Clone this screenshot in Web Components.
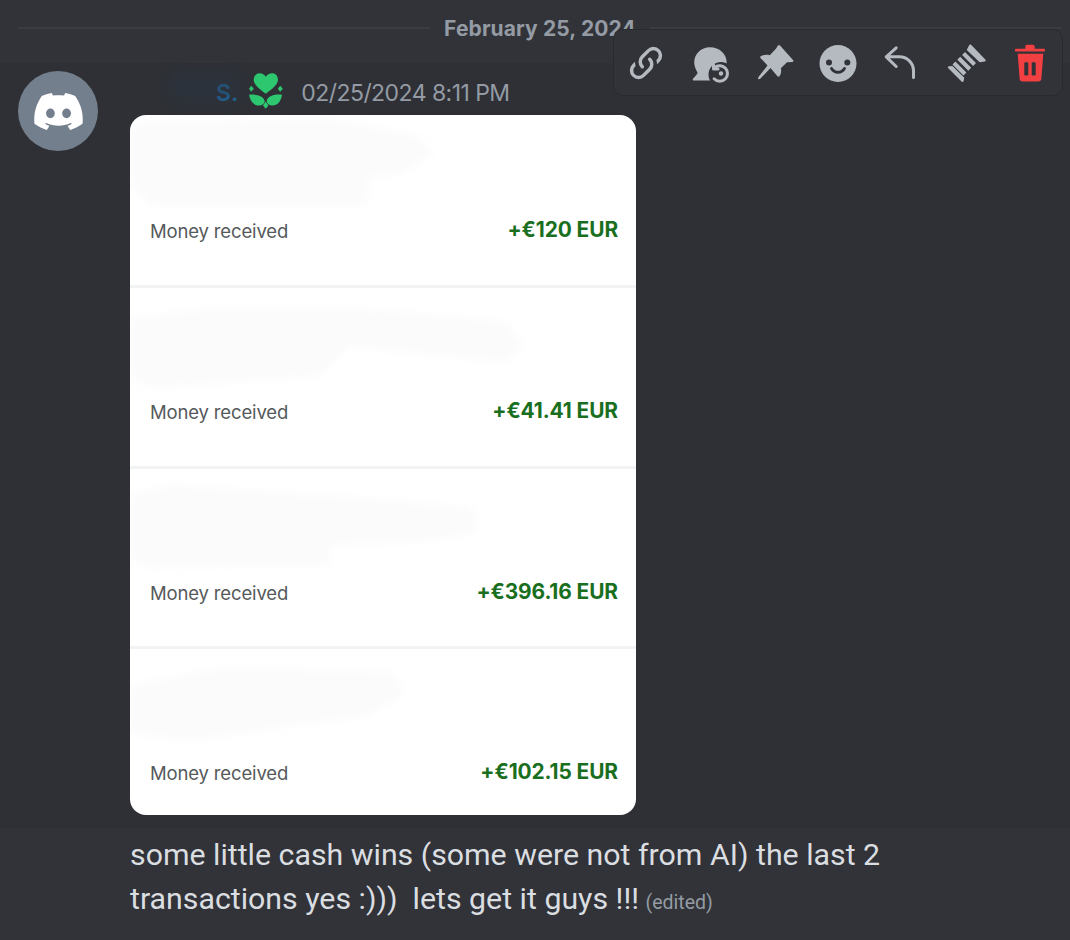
<!DOCTYPE html>
<html lang="en">
<head>
<meta charset="utf-8">
<title>Money received</title>
<style>
  html, body { margin: 0; background: #313338; }
  body { width: 1070px; height: 940px; overflow: hidden; font-family: "Noto Sans", "Liberation Sans", sans-serif; }
</style>
</head>
<body>
<chat-page>
  <date-divider slot="divider">February 25, 2024</date-divider>
  <message-toolbar slot="toolbar"></message-toolbar>
  <chat-message slot="message" stamp="02/25/2024 8:11 PM" author="S.">
    <tx-card>
      <tx-row amount="+€120 EUR" smudge="0"></tx-row>
      <tx-row amount="+€41.41 EUR" smudge="1"></tx-row>
      <tx-row amount="+€396.16 EUR" smudge="2"></tx-row>
      <tx-row amount="+€102.15 EUR" smudge="3"></tx-row>
    </tx-card>
    <span slot="text">some little cash wins (some were not from AI) the last 2<br>transactions yes :)))&nbsp; lets get it guys !!!</span>
  </chat-message>
</chat-page>

<script>
// 页面外壳
class ChatPage extends HTMLElement {
  constructor() {
    super();
    this.attachShadow({mode: 'open'});
    this.shadowRoot.innerHTML = `
      <style>
        :host { display: block; position: relative; height: 940px; background: #313338; }
        .bar { position: absolute; top: 29px; left: 613px; z-index: 2; }
      </style>
      <slot name="divider"></slot>
      <div class="bar"><slot name="toolbar"></slot></div>
      <slot name="message"></slot>
    `;
  }
}

class DateDivider extends HTMLElement {
  constructor() {
    super();
    this.attachShadow({mode: 'open'});
    this.shadowRoot.innerHTML = `
      <style>
        :host { display: flex; align-items: center; box-sizing: border-box; height: 63px; padding: 0 8px 7px 18px; gap: 14px; }
        i { flex: 1; height: 2px; background: #3a3c42; }
        span { font: 700 21px "Inter", "Liberation Sans", sans-serif; letter-spacing: 0.12px; color: #949ba4; white-space: nowrap; }
      </style>
      <i></i><span><slot></slot></span><i></i>
    `;
  }
}

// 工具栏图标
const ICONS = {
  link: `<svg width="42" height="42" viewBox="0 0 24 24" fill="#b5bac1"><path d="M10.59 13.41c.41.39.41 1.03 0 1.42-.39.39-1.03.39-1.42 0a5.003 5.003 0 0 1 0-7.07l3.54-3.54a5.003 5.003 0 0 1 7.07 0 5.003 5.003 0 0 1 0 7.07l-1.49 1.49c.01-.82-.12-1.64-.4-2.42l.47-.48a2.982 2.982 0 0 0 0-4.24 2.982 2.982 0 0 0-4.24 0l-3.53 3.53a2.982 2.982 0 0 0 0 4.24zm2.82-4.24c.39-.39 1.03-.39 1.42 0a5.003 5.003 0 0 1 0 7.07l-3.54 3.54a5.003 5.003 0 0 1-7.07 0 5.003 5.003 0 0 1 0-7.07l1.49-1.49c-.01.82.12 1.64.4 2.43l-.47.47a2.982 2.982 0 0 0 0 4.24 2.982 2.982 0 0 0 4.24 0l3.53-3.53a2.982 2.982 0 0 0 0-4.24.973.973 0 0 1 0-1.42z"/></svg>`,
  unread: `<svg width="42" height="42" viewBox="0 0 42 42"><path fill="#b5bac1" d="M21 5.200c9.500 0 16.700 6.800 16.700 15.300 0 3-1 6-2.500 8.500L25 38.500H5c-1.200 0-1.600-.9-1-1.800 1.600-2 4-3.800 4.600-6C6.800 27.500 5.200 24 5.200 20.500 5.200 12 12 5.200 21 5.200z"/><circle cx="32" cy="32.500" r="12.500" fill="#313338"/><path fill="none" stroke="#b5bac1" stroke-width="3" stroke-linecap="round" stroke-linejoin="round" d="M29 27h-4.500v-4.500M25 26.500c1.500-2 4-3 6.500-2.800 4 .4 7 3.800 7 7.800 0 4.400-3.500 7.800-7.700 7.800-2.300 0-4.300-1-5.700-2.500"/><circle cx="32" cy="31.500" r="2.200" fill="#b5bac1"/></svg>`,
  pin: `<svg width="42" height="42" viewBox="0 0 42 42" fill="#b5bac1"><path d="M25 3.500c.6-.8 1.400-.8 2 0L40 18c.7.8.4 1.800-.6 2l-5.400.3-6.200 6c.8 2.800.3 5.700-1.400 8-.5.6-1.200.6-1.700.1L17.500 26l-10 10.500c-1 1-2.500 1-2.500 0 0-.8.5-1.500 1-2.300l8.500-10.700-7-7.500c-.6-.6-.5-1.400.2-1.800 2.800-1.500 6-1.900 9-1l6-6.200z"/></svg>`,
  smile: `<svg width="40" height="40" viewBox="0 0 40 40"><circle cx="20" cy="20.500" r="18.500" fill="#b5bac1"/><circle cx="11" cy="19.500" r="3" fill="#313338"/><circle cx="29.300" cy="19.500" r="3" fill="#313338"/><path d="M13.500 25.500c3 5 10 5 13 0" fill="none" stroke="#313338" stroke-width="2.800" stroke-linecap="round"/></svg>`,
  reply: `<svg width="42" height="42" viewBox="0 0 42 42" fill="none" stroke="#b5bac1" stroke-width="3" stroke-linecap="round" stroke-linejoin="round"><g transform="translate(-.5 0)"><path d="M15.700 5.800L5.700 14.800l10 9.700M5.700 14.800h13c8 0 14.300 6 14.300 14v6.800"/></g></svg>`,
  thread: `<svg width="42" height="42" viewBox="0 0 42 42" fill="#b5bac1"><path d="M24 3.500c.5-1 1.500-1.200 2.300-.5l14 14.500c.8.800.4 1.800-.6 2l-5 .7L21.700 8z"/><path d="M20 10l11 11-2.900 2.900-11-11zM15.200 14.800l11 11-2.900 2.900-11-11zM10.400 19.600l11 11-2.900 2.900-11-11z"/><path d="M7.500 24l11.800 11.800-.7 3.200c-.2 1-1.300 1.400-2.100.6L3.300 26.300c-.8-.8-.4-1.900.6-2z"/></svg>`,
  trash: `<svg width="42" height="42" viewBox="0 0 42 42"><path fill="#f23f42" d="M18 2.800h6c1 0 1.700.8 1.700 1.700v2.300H35c.7 0 1 .5 1 1v1.200c0 .3-.3.500-.6.500H6.600c-.3 0-.6-.2-.6-.5V7.800c0-.5.300-1 1-1h9.300V4.500c0-.9.700-1.700 1.700-1.700z"/><path fill="#f23f42" d="M8.700 11.800h25.600l-1.900 25c-.1 1.500-1.300 2.700-2.900 2.700H13.500c-1.600 0-2.800-1.200-2.900-2.700z"/><rect x="15.300" y="20.200" width="4" height="13.300" rx="1.200" fill="#313338"/><rect x="22.700" y="20.200" width="4" height="13.300" rx="1.200" fill="#313338"/></svg>`
};

class MessageToolbar extends HTMLElement {
  constructor() {
    super();
    this.attachShadow({mode: 'open'});
    const names = ['link', 'unread', 'pin', 'smile', 'reply', 'thread', 'trash'];
    this.shadowRoot.innerHTML = `
      <style>
        :host { display: flex; box-sizing: border-box; width: 450px; height: 67px; align-items: center;
                background: #313338; border: 1px solid #292a2f; border-radius: 10px; }
        .ic { flex: 0 0 64px; height: 100%; display: flex; align-items: center; justify-content: center; }
        svg { display: block; }
      </style>
      ${names.map(n => `<div class="ic">${ICONS[n]}</div>`).join('')}
    `;
  }
}

class ChatMessage extends HTMLElement {
  constructor() {
    super();
    this.attachShadow({mode: 'open'});
    this.shadowRoot.innerHTML = `
      <style>
        :host { display: block; }
        .band { display: flex; box-sizing: border-box; height: 765px; padding: 8px 0 0 18px; background: #2e3035; }
        .avatar { flex: 0 0 80px; height: 80px; border-radius: 50%; background: #747f8d; display: flex; align-items: center; justify-content: center; }
        .main { margin-left: 32px; width: 506px; }
        .head { display: flex; align-items: center; height: 44px; position: relative; }
        .name { margin-left: 86px; font: 600 23px "Inter", "Liberation Sans", sans-serif; color: #1e6ba5; }
        .smudge { position: absolute; left: 40px; top: 3px; width: 70px; height: 26px; background: #2b3644; filter: blur(8px); opacity: .55; }
        .badge { margin: -4px 0 0 11px; display: block; }
        .stamp { margin-left: 18px; font: 400 23px "Inter", "Liberation Sans", sans-serif; letter-spacing: -0.55px; color: #949ba4; white-space: nowrap; }
        .text { padding: 5px 0 0 130px; font: 400 30.300px/44px "Roboto", "Liberation Sans", sans-serif; color: #dbdee1; white-space: nowrap; }
        .edited { font-size: 19.500px; color: #949ba4; margin-left: -1px; }
      </style>
      <div class="band">
        <div class="avatar">
          <svg width="49" height="37" viewBox="0 0 24 18.300" fill="#fff"><path transform="translate(0 -2.850)" d="M20.317 4.3698a19.7913 19.7913 0 00-4.8851-1.5152.0741.0741 0 00-.0785.0371c-.211.3753-.4447.8648-.6083 1.2495-1.8447-.2762-3.68-.2762-5.4868 0-.1636-.3933-.4058-.8742-.6177-1.2495a.077.077 0 00-.0785-.037 19.7363 19.7363 0 00-4.8852 1.515.0699.0699 0 00-.0321.0277C.5334 9.0458-.319 13.5799.0992 18.0578a.0824.0824 0 00.0312.0561c2.0528 1.5076 4.0413 2.4228 5.9929 3.0294a.0777.0777 0 00.0842-.0276c.4616-.6304.8731-1.2952 1.226-1.9942a.076.076 0 00-.0416-.1057c-.6528-.2476-1.2743-.5495-1.8722-.8923a.077.077 0 01-.0076-.1277c.1258-.0943.2517-.1923.3718-.2914a.0743.0743 0 01.0776-.0105c3.9278 1.7933 8.18 1.7933 12.0614 0a.0739.0739 0 01.0785.0095c.1202.099.246.1981.3728.2924a.077.077 0 01-.0066.1276 12.2986 12.2986 0 01-1.873.8914.0766.0766 0 00-.0407.1067c.3604.698.7719 1.3628 1.225 1.9932a.076.076 0 00.0842.0286c1.961-.6067 3.9495-1.5219 6.0023-3.0294a.077.077 0 00.0313-.0552c.5004-5.177-.8382-9.6739-3.5485-13.6604a.061.061 0 00-.0312-.0286zM8.02 15.3312c-1.1825 0-2.1569-1.0857-2.1569-2.419 0-1.3332.9555-2.4189 2.157-2.4189 1.2108 0 2.1757 1.0952 2.1568 2.419 0 1.3332-.9555 2.4189-2.1569 2.4189zm7.9748 0c-1.1825 0-2.1569-1.0857-2.1569-2.419 0-1.3332.9554-2.4189 2.1569-2.4189 1.2108 0 2.1757 1.0952 2.1568 2.419 0 1.3332-.946 2.4189-2.1568 2.4189Z"/></svg>
        </div>
        <div class="main">
          <div class="head">
            <div class="smudge"></div>
            <span class="name"></span>
            <svg class="badge" width="34" height="36" viewBox="0 0 34 36" fill="#2dc770">
              <path d="M16.800 20.800C13 17.500 4.700 12.500 4.700 6.800 4.700 3 7.300.3 10.500.3c2.800 0 4.800 1.300 6.300 3.400C18.300 1.600 20.300.3 23.200.3 26.400.3 29 3 29 6.800c0 5.700-8.400 10.700-12.200 14z"/>
              <path d="M15.700 28c-.2 2.300-1.800 4.200-5 4.500C5.500 33 1.500 29 0 21.800c5.500-.8 14.800.5 15.700 6.200zM17.700 28c.2 2.300 1.800 4.200 5 4.500 5.200.5 9.200-3.500 10.300-10.700-5.500-.8-14.400.5-15.300 6.200z"/>
              <path d="M16.700 28.500l2.700 4-2.700 3.200-2.700-3.200zM2.200 12.800l2.600 3-2.600 3-2.200-3zM31.200 12.800l2.600 3-2.600 3-2.400-3z"/>
            </svg>
            <span class="stamp"></span>
          </div>
          <slot></slot>
        </div>
      </div>
      <div class="text"><slot name="text"></slot> <span class="edited">(edited)</span></div>
    `;
    this.shadowRoot.querySelector('.name').textContent = this.getAttribute('author');
    this.shadowRoot.querySelector('.stamp').textContent = this.getAttribute('stamp');
  }
}

class TxCard extends HTMLElement {
  constructor() {
    super();
    this.attachShadow({mode: 'open'});
    this.shadowRoot.innerHTML = `
      <style>
        :host { display: block; width: 506px; height: 700px; background: #fff; border-radius: 16px; overflow: hidden; }
      </style>
      <slot></slot>
    `;
  }
}

// 打码的涂抹区域，每行一块
const SMUDGES = [
  'M0 12 L20 6 L200 4 L285 20 L305 38 L272 58 L238 62 L238 90 L20 90 L0 70Z',
  'M0 30 L90 20 L250 22 L376 34 L394 60 L372 74 L220 58 L190 88 L20 100 L0 90Z',
  'M0 26 L40 16 L250 30 L344 40 L348 62 L300 72 L200 76 L200 96 L20 98 L0 90Z',
  'M0 36 L100 18 L262 24 L276 44 L240 66 L60 92 L0 84Z'
];

class TxRow extends HTMLElement {
  constructor() {
    super();
    this.attachShadow({mode: 'open'});
    const i = +this.getAttribute('smudge');
    this.shadowRoot.innerHTML = `
      <style>
        :host { display: block; box-sizing: border-box; height: 180.500px; border-top: 3px solid #f2f3f3; }
        :host(:first-child) { height: 170px; border-top: 0; }
        svg { display: block; width: 506px; height: 110px; }
        :host(:first-child) svg { height: 102px; }
        path { filter: blur(4px); }
        .line { display: flex; justify-content: space-between; align-items: center; height: 28px; padding: 0 18px 0 20px; }
        .label { font: 400 18.500px "Inter", "Liberation Sans", sans-serif; letter-spacing: -0.15px; color: #55595b; }
        .amount { padding-bottom: 3px; font: 700 20.900px "Inter", "Liberation Sans", sans-serif; letter-spacing: -0.1px; color: #1a6f1f; }
      </style>
      <svg><path d="${SMUDGES[i]}" fill="#fbfbfb"/></svg>
      <div class="line"><span class="label">Money received</span><span class="amount"></span></div>
    `;
    this.shadowRoot.querySelector('.amount').textContent = this.getAttribute('amount');
  }
}

customElements.define('chat-page', ChatPage);
customElements.define('date-divider', DateDivider);
customElements.define('message-toolbar', MessageToolbar);
customElements.define('chat-message', ChatMessage);
customElements.define('tx-card', TxCard);
customElements.define('tx-row', TxRow);
</script>
</body>
</html>
